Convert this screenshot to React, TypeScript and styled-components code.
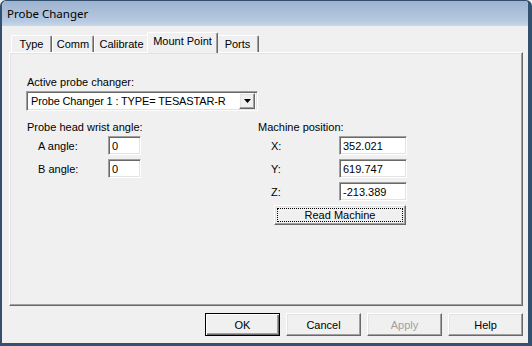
import styled, { createGlobalStyle, css } from "styled-components"

const GlobalStyle = createGlobalStyle`
  html, body {
    margin: 0;
    padding: 0;
    background: #f0f0f0;
  }
  body {
    font-family: "Liberation Sans", Arial, sans-serif;
    font-size: 11px;
    color: #000;
  }
`

// classic 3D edges
const raised = css`
  border: 1px solid;
  border-color: #fff #696969 #696969 #fff;
  box-shadow: inset -1px -1px 0 #a0a0a0, inset 1px 1px 0 #e3e3e3;
`

const sunken = css`
  border: 1px solid;
  border-color: #a0a0a0 #fff #fff #a0a0a0;
  box-shadow: inset 1px 1px 0 #696969, inset -1px -1px 0 #e3e3e3;
`

const Window = styled.div`
  width: 532px;
  height: 346px;
  box-sizing: border-box;
  display: flex;
  flex-direction: column;
  border-style: solid;
  border-color: #34506f;
  border-width: 1px 4px 3px 2px;
  border-radius: 6px 6px 0 0;
  background: #f0f0f0;
  overflow: hidden;
`

const TitleBar = styled.div`
  height: 25px;
  flex: none;
  display: flex;
  align-items: center;
  padding-left: 5px;
  background: linear-gradient(#9cb3cf, #b6c9e1 80%, #c9d8ea);
  font-family: "Noto Sans", "Liberation Sans", sans-serif;
  font-size: 11.5px;
  color: #000;
`

const Client = styled.div`
  flex: 1;
  display: flex;
  flex-direction: column;
  padding: 6px 5px 7px 7px;
`

const TabStrip = styled.div`
  height: 20px;
  display: flex;
  align-items: flex-end;
  padding-left: 2px;
  position: relative;
  z-index: 1;
`

const Tab = styled.div<{ $w: number; $active?: boolean }>`
  box-sizing: border-box;
  width: ${p => p.$w}px;
  height: 17px;
  display: flex;
  align-items: center;
  justify-content: center;
  background: #f0f0f0;
  border-top: 1px solid #fff;
  border-left: 1px solid #fff;
  border-right: 1px solid #696969;
  border-radius: 2px 2px 0 0;
  box-shadow: inset -1px 0 0 #a0a0a0;
  padding-bottom: 1px;
  ${p =>
    p.$active &&
    css`
      width: ${p.$w + 4}px;
      height: 21px;
      margin: 0 -2px -1px;
      padding-bottom: 4px;
      position: relative;
      z-index: 2;
    `}
`

const Panel = styled.div`
  box-sizing: border-box;
  height: 254px;
  ${raised};
  padding: 22px 0 0 16px;
`

const Label = styled.div`
  line-height: 14px;
  white-space: nowrap;
  padding-left: 1px;
`

const Select = styled.div`
  box-sizing: border-box;
  width: 232px;
  height: 20px;
  margin-top: 2px;
  ${sunken};
  background: #fff;
  display: flex;
  align-items: center;
  padding: 2px 2px 2px 4px;
`

const SelectText = styled.span`
  flex: 1;
  white-space: nowrap;
  letter-spacing: -0.15px;
`

const DropButton = styled.div`
  box-sizing: border-box;
  width: 16px;
  height: 16px;
  ${raised};
  background: #f0f0f0;
  display: flex;
  align-items: center;
  justify-content: center;
`

const Columns = styled.div`
  display: grid;
  grid-template-columns: 231px 1fr;
  margin-top: 9px;
`

const Column = styled.div`
  display: flex;
  flex-direction: column;
`

const Rows = styled.div`
  display: flex;
  flex-direction: column;
  gap: 4px;
  margin-top: 2px;
`

const FieldRow = styled.div<{ $indent: number; $labelW: number }>`
  display: grid;
  grid-template-columns: ${p => p.$labelW}px auto;
  align-items: center;
  padding-left: ${p => p.$indent}px;
  height: 19px;
`

const Edit = styled.div<{ $w: number }>`
  box-sizing: border-box;
  width: ${p => p.$w}px;
  height: 19px;
  ${sunken};
  background: #fff;
  padding: 0 3px;
  display: flex;
  align-items: center;
`

const Button = styled.div<{ $w: number; $h: number; $default?: boolean; $disabled?: boolean }>`
  box-sizing: border-box;
  width: ${p => p.$w}px;
  height: ${p => p.$h}px;
  display: flex;
  align-items: center;
  justify-content: center;
  background: #f0f0f0;
  ${raised};
  color: ${p => (p.$disabled ? "#a0a0a0" : "#000")};
  ${p =>
    p.$default &&
    css`
      border: 1px solid #000;
      box-shadow: inset 1px 1px 0 #fff, inset -1px -1px 0 #696969, inset -2px -2px 0 #a0a0a0;
    `}
`

const FocusRect = styled.span`
  align-self: stretch;
  flex: 1;
  margin: 2px;
  border: 1px dotted #000;
  display: flex;
  align-items: center;
  justify-content: center;
`

const ReadRow = styled.div`
  margin: 4px 0 0 17px;
`

const ButtonBar = styled.div`
  display: flex;
  justify-content: flex-end;
  gap: 6px;
  margin-top: 7px;
`

const tabs = [
  { name: "Type", w: 41 },
  { name: "Comm", w: 42 },
  { name: "Calibrate", w: 55 },
  { name: "Mount Point", w: 67, active: true },
  { name: "Ports", w: 43 },
]

export default function App() {
  return (
    <>
      <GlobalStyle />
      <Window>
        <TitleBar>Probe Changer</TitleBar>
        <Client>
          <TabStrip>
            {tabs.map(t => (
              <Tab key={t.name} $w={t.w} $active={t.active}>
                {t.name}
              </Tab>
            ))}
          </TabStrip>
          <Panel>
            <Label>Active probe changer:</Label>
            <Select>
              <SelectText>Probe Changer 1 : TYPE= TESASTAR-R</SelectText>
              <DropButton>
                <svg width="7" height="4" viewBox="0 0 7 4">
                  <path d="M0 0h7L3.5 4z" fill="#000" />
                </svg>
              </DropButton>
            </Select>
            <Columns>
              <Column>
                <Label>Probe head wrist angle:</Label>
                <Rows>
                  <FieldRow $indent={12} $labelW={70}>
                    <span>A angle:</span>
                    <Edit $w={33}>0</Edit>
                  </FieldRow>
                  <FieldRow $indent={12} $labelW={70}>
                    <span>B angle:</span>
                    <Edit $w={33}>0</Edit>
                  </FieldRow>
                </Rows>
              </Column>
              <Column>
                <Label>Machine position:</Label>
                <Rows>
                  <FieldRow $indent={14} $labelW={68}>
                    <span>X:</span>
                    <Edit $w={68}>352.021</Edit>
                  </FieldRow>
                  <FieldRow $indent={14} $labelW={68}>
                    <span>Y:</span>
                    <Edit $w={68}>619.747</Edit>
                  </FieldRow>
                  <FieldRow $indent={14} $labelW={68}>
                    <span>Z:</span>
                    <Edit $w={68}>-213.389</Edit>
                  </FieldRow>
                </Rows>
                <ReadRow>
                  <Button $w={132} $h={20}>
                    <FocusRect>Read Machine</FocusRect>
                  </Button>
                </ReadRow>
              </Column>
            </Columns>
          </Panel>
          <ButtonBar>
            <Button $w={75} $h={23} $default>
              OK
            </Button>
            <Button $w={75} $h={23}>
              Cancel
            </Button>
            <Button $w={75} $h={23} $disabled>
              Apply
            </Button>
            <Button $w={75} $h={23}>
              Help
            </Button>
          </ButtonBar>
        </Client>
      </Window>
    </>
  )
}
